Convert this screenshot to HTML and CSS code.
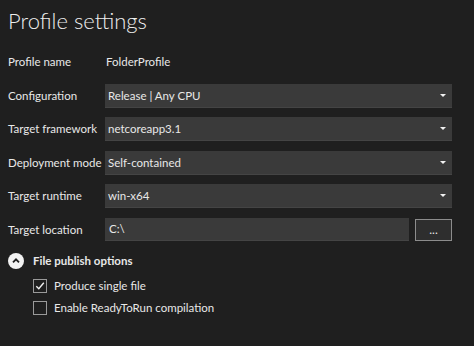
FILE: index.html
```html
<!DOCTYPE html>
<html lang="en">
<head>
    <meta charset="UTF-8">
    <title>Profile settings</title>
    <link rel="stylesheet" href="styles.css">
</head>
<body>
    <div class="page">
        <h1>Profile settings</h1>

        <div class="form">
            <label class="label">Profile name</label>
            <div class="value">FolderProfile</div>

            <label class="label">Configuration</label>
            <div class="combo"><span>Release | Any CPU</span><i class="arrow"></i></div>

            <label class="label">Target framework</label>
            <div class="combo"><span>netcoreapp3.1</span><i class="arrow"></i></div>

            <label class="label">Deployment mode</label>
            <div class="combo"><span>Self-contained</span><i class="arrow"></i></div>

            <label class="label">Target runtime</label>
            <div class="combo"><span>win-x64</span><i class="arrow"></i></div>

            <label class="label">Target location</label>
            <div class="location">
                <div class="textbox">C:\</div>
                <button class="browse">...</button>
            </div>
        </div>

        <div class="options">
            <div class="options-head">
                <svg class="toggle" width="16" height="16" viewBox="0 0 16 16">
                    <circle cx="8" cy="8" r="8" fill="#f2f2f2"/>
                    <path d="M5 9.3 L8 6.3 L11 9.3" fill="none" stroke="#1f1f1f" stroke-width="1.8"/>
                </svg>
                <span>File publish options</span>
            </div>
            <label class="check"><span class="box checked"><svg width="12" height="12" viewBox="0 0 12 12"><path d="M2.3 6.3 L4.8 8.8 L9.8 2.8" fill="none" stroke="#f0f0f0" stroke-width="1.4"/></svg></span>Produce single file</label>
            <label class="check"><span class="box"></span>Enable ReadyToRun compilation</label>
        </div>
    </div>
</body>
</html>
```

FILE: styles.css
```css
body {
    margin: 0;
    background: #1f1f1f;
    color: #e8e8e8;
    font-family: Lato, "Open Sans", Arial, sans-serif;
    font-size: 11.5px;
}

.page {
    padding: 6px 22px 0 8px;
}

h1 {
    margin: 0;
    font-size: 22px;
    font-weight: 300;
    line-height: 30px;
    color: #eeeeee;
}

.form {
    display: grid;
    grid-template-columns: 97px 1fr;
    grid-auto-rows: 24px;
    row-gap: 9.5px;
    margin-top: 14px;
    align-items: center;
}

.label,
.value {
    line-height: 24px;
    white-space: nowrap;
}

.value {
    padding-left: 1px;
}

.combo {
    height: 24px;
    background: #3a3a3a;
    border-bottom: 1px solid #444;
    box-sizing: border-box;
    display: flex;
    align-items: center;
    justify-content: space-between;
    padding: 0 6px 0 3px;
}

.arrow {
    width: 0;
    height: 0;
    border-left: 3px solid transparent;
    border-right: 3px solid transparent;
    border-top: 3px solid #f2f2f2;
}

.location {
    display: flex;
    gap: 6px;
    height: 24px;
    align-items: center;
}

.textbox {
    flex: 1;
    height: 22px;
    line-height: 22px;
    background: #3a3a3a;
    border-bottom: 1px solid #444;
    padding-left: 4px;
}

.browse {
    width: 37px;
    height: 22px;
    background: #2e2e2e;
    border: 1px solid #8c8c8c;
    color: #e8e8e8;
    font-family: inherit;
    font-size: 12px;
    line-height: 12px;
    padding: 0;
}

.options {
    margin-top: 9px;
}

.options-head {
    display: flex;
    align-items: center;
    gap: 9px;
    height: 20px;
    font-weight: 700;
}

.check {
    display: flex;
    align-items: center;
    gap: 7px;
    height: 14px;
    margin: 8px 0 0 25px;
}

.box {
    width: 14px;
    height: 14px;
    box-sizing: border-box;
    border: 1px solid #9a9a9a;
    display: flex;
    align-items: center;
    justify-content: center;
}
```
